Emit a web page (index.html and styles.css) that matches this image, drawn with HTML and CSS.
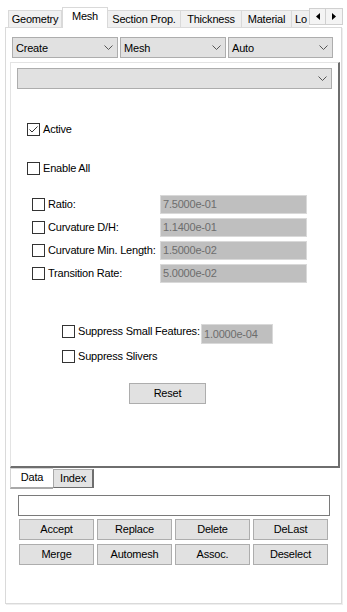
FILE: index.html
```html
<!DOCTYPE html>
<html>
<head>
<meta charset="utf-8">
<link rel="stylesheet" href="styles.css">
</head>
<body>
<div class="tabbar">
  <div class="tabs">
    <div class="tab first w-geo">Geometry</div>
    <div class="tab sel w-mesh">Mesh</div>
    <div class="tab w-sec">Section Prop.</div>
    <div class="tab w-thk">Thickness</div>
    <div class="tab w-mat">Material</div>
    <div class="tab w-lo">Lo</div>
  </div>
  <div class="arrows">
    <span class="arr"><svg width="4" height="7" viewBox="0 0 4 7"><path d="M4 0 L0 3.5 L4 7 Z" fill="#000"/></svg></span>
    <span class="arr"><svg width="4" height="7" viewBox="0 0 4 7"><path d="M0 0 L4 3.5 L0 7 Z" fill="#000"/></svg></span>
  </div>
</div>

<div class="panel">
  <div class="selects">
    <div class="dd"><span>Create</span><svg class="chev" width="9" height="5" viewBox="0 0 9 5"><path d="M0.5 0.5 L4.5 4.5 L8.5 0.5" fill="none" stroke="#555" stroke-width="1"/></svg></div>
    <div class="dd"><span>Mesh</span><svg class="chev" width="9" height="5" viewBox="0 0 9 5"><path d="M0.5 0.5 L4.5 4.5 L8.5 0.5" fill="none" stroke="#555" stroke-width="1"/></svg></div>
    <div class="dd"><span>Auto</span><svg class="chev" width="9" height="5" viewBox="0 0 9 5"><path d="M0.5 0.5 L4.5 4.5 L8.5 0.5" fill="none" stroke="#555" stroke-width="1"/></svg></div>
  </div>

  <div class="frame">
    <div class="dd combo"><span></span><svg class="chev" width="9" height="5" viewBox="0 0 9 5"><path d="M0.5 0.5 L4.5 4.5 L8.5 0.5" fill="none" stroke="#555" stroke-width="1"/></svg></div>

    <div class="chk active-row"><span class="cb"><svg width="11" height="11" viewBox="0 0 11 11"><path d="M1.5 5.5 L4 8 L9.5 2.5" fill="none" stroke="#333" stroke-width="1"/></svg></span><span>Active</span></div>
    <div class="chk enable-row"><span class="cb"></span><span>Enable All</span></div>

    <div class="params">
      <div class="param"><div class="chk plabel"><span class="cb"></span><span>Ratio:</span></div><div class="field">7.5000e-01</div></div>
      <div class="param"><div class="chk plabel"><span class="cb"></span><span>Curvature D/H:</span></div><div class="field">1.1400e-01</div></div>
      <div class="param"><div class="chk plabel"><span class="cb"></span><span>Curvature Min. Length:</span></div><div class="field">1.5000e-02</div></div>
      <div class="param"><div class="chk plabel"><span class="cb"></span><span>Transition Rate:</span></div><div class="field">5.0000e-02</div></div>
    </div>

    <div class="supp">
      <div class="supp-row">
        <div class="chk slabel"><span class="cb"></span><span>Suppress Small Features:</span></div>
        <div class="field small">1.0000e-04</div>
      </div>
      <div class="chk slivers"><span class="cb"></span><span>Suppress Slivers</span></div>
    </div>

    <div class="btn reset">Reset</div>
  </div>

  <div class="btabs">
    <div class="btab on">Data</div>
    <div class="btab off">Index</div>
  </div>

  <div class="textbox"></div>

  <div class="buttons">
    <div class="btn">Accept</div>
    <div class="btn">Replace</div>
    <div class="btn">Delete</div>
    <div class="btn">DeLast</div>
    <div class="btn">Merge</div>
    <div class="btn">Automesh</div>
    <div class="btn">Assoc.</div>
    <div class="btn">Deselect</div>
  </div>
</div>
</body>
</html>
```

FILE: styles.css
```css
html, body {
  margin: 0;
  padding: 0;
  background: #fff;
}
body {
  width: 347px;
  height: 612px;
  overflow: hidden;
  font-family: "Liberation Sans", Arial, sans-serif;
  font-size: 11px;
  letter-spacing: -0.2px;
  color: #000;
}

/* top tab strip */
.tabbar {
  display: flex;
  height: 28px;
  position: relative;
  z-index: 1;
}
.tabs {
  display: flex;
  align-items: flex-start;
  width: 301px;
  margin-left: 8px;
  overflow: hidden;
  flex: none;
}
.tab {
  flex: none;
  box-sizing: border-box;
  margin-top: 10px;
  height: 17px;
  line-height: 16px;
  text-align: center;
  white-space: nowrap;
  background: #f0f0f0;
  border-top: 1px solid #d9d9d9;
  border-right: 1px solid #d9d9d9;
  color: #000;
}
.tab.first { border-left: 1px solid #d9d9d9; }
.tab.sel {
  margin-top: 7px;
  height: 21px;
  line-height: 17px;
  background: #fff;
  border-left: 1px solid #d9d9d9;
}
.w-geo { width: 54px; }
.w-mesh { width: 46px; }
.w-sec { width: 73px; }
.w-thk { width: 61px; }
.w-mat { width: 50px; }
.w-lo { width: 40px; text-align: left; padding-left: 3px; }

.arrows {
  display: flex;
  margin-top: 8px;
  height: 17px;
  flex: none;
}
.arr {
  width: 17px;
  height: 17px;
  box-sizing: border-box;
  border: 1px solid #d0d0d0;
  background: #f4f4f4;
  display: flex;
  align-items: center;
  justify-content: center;
}
.arr + .arr { border-left: none; }

/* main panel */
.panel {
  margin: -1px 0 0 5px;
  width: 337px;
  height: 577px;
  box-sizing: border-box;
  border: 1px solid #dadada;
  box-shadow: 1px 1px 0 #eeeeee;
  background: #fff;
}
.selects {
  display: grid;
  grid-template-columns: 106px 106px 105px;
  gap: 2px;
  margin: 9px 0 0 6px;
}
.dd {
  height: 21px;
  box-sizing: border-box;
  border: 1px solid #adadad;
  background: #e1e1e1;
  display: flex;
  align-items: center;
  justify-content: space-between;
  padding: 0 4px 0 3px;
  white-space: nowrap;
}
.chev { flex: none; }

.frame {
  margin: 4px 0 0 4px;
  width: 330px;
  height: 406px;
  box-sizing: border-box;
  border-top: 1px solid #e3e3e3;
  border-left: 1px solid #e3e3e3;
  border-right: 2px solid #6e6e6e;
  border-bottom: 2px solid #6e6e6e;
}
.combo {
  margin: 5px 6px 0 6px;
}

.chk {
  display: flex;
  align-items: center;
  gap: 3px;
  height: 13px;
  line-height: 13px;
  white-space: nowrap;
}
.cb {
  flex: none;
  width: 13px;
  height: 13px;
  box-sizing: border-box;
  border: 1px solid #333;
  background: #fff;
  display: flex;
  align-items: center;
  justify-content: center;
}
.active-row { margin: 34px 0 0 16px; }
.enable-row { margin: 26px 0 0 16px; }

.params {
  margin: 20px 0 0 21px;
  display: flex;
  flex-direction: column;
  gap: 4px;
}
.param {
  display: flex;
  align-items: center;
  height: 19px;
}
.plabel { width: 128px; flex: none; }
.field {
  box-sizing: border-box;
  width: 147px;
  height: 19px;
  line-height: 17px;
  padding-left: 2px;
  background: #bfbfbf;
  border: 1px solid #d9d9d9;
  color: #6d6d6d;
}

.supp {
  margin: 41px 0 0 51px;
}
.supp-row {
  display: flex;
  align-items: flex-start;
  height: 20px;
}
.slabel { width: 139px; flex: none; margin-top: 1px; }
.field.small {
  width: 72px;
  height: 20px;
  line-height: 18px;
}
.slivers { margin-top: 6px; }

.btn {
  box-sizing: border-box;
  height: 21px;
  line-height: 19px;
  text-align: center;
  background: #e1e1e1;
  border: 1px solid #adadad;
  white-space: nowrap;
}
.reset {
  width: 77px;
  margin: 20px 0 0 118px;
}

/* bottom tabs */
.btabs {
  display: flex;
  align-items: flex-start;
  margin-left: 4px;
}
.btab {
  box-sizing: border-box;
  text-align: center;
}
.btab.on {
  width: 43px;
  height: 21px;
  line-height: 16px;
  background: #fff;
  border-top: 1px solid #d4d4d4;
  border-left: 1px solid #d4d4d4;
  border-bottom: 2px solid #a9a9a9;
}
.btab.off {
  width: 41px;
  height: 19px;
  margin-top: 1px;
  line-height: 16px;
  background: #e3e3e3;
  border-top: 1px solid #a8a8a8;
  border-left: 1px solid #a8a8a8;
  border-right: 2px solid #6e6e6e;
  border-bottom: 1px solid #6e6e6e;
}

.textbox {
  margin: 6px 0 0 12px;
  width: 312px;
  height: 21px;
  box-sizing: border-box;
  border: 1px solid #7a7a7a;
  background: #fff;
}
.buttons {
  margin: 3px 0 0 13px;
  display: grid;
  grid-template-columns: repeat(4, 75px);
  grid-auto-rows: 21px;
  column-gap: 3px;
  row-gap: 4px;
}
```
